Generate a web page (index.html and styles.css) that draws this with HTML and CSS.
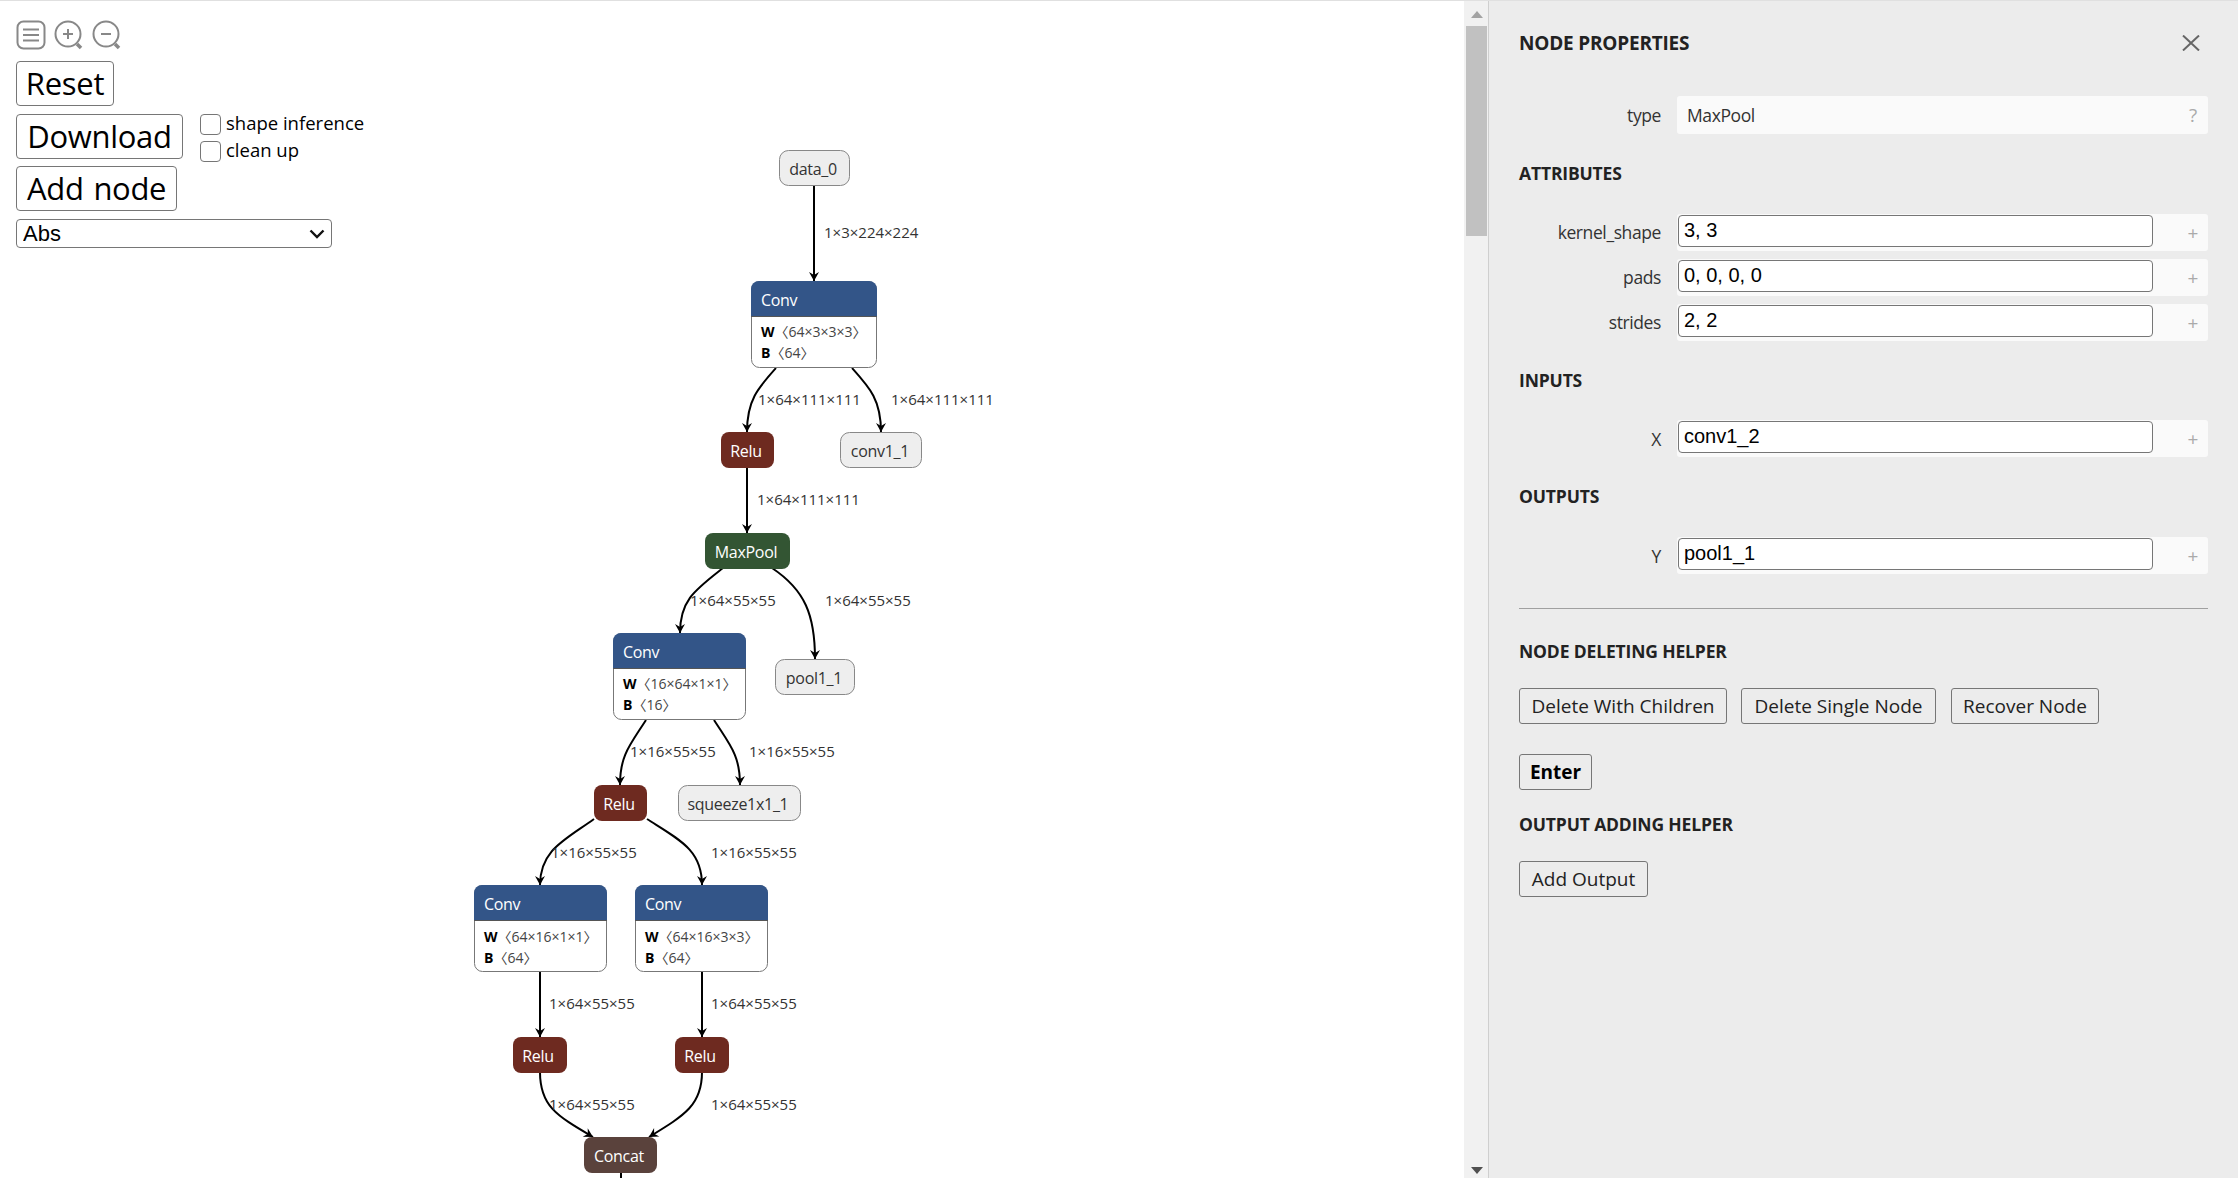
FILE: index.html
```html
<!DOCTYPE html>
<html lang="en">
<head>
<meta charset="utf-8">
<title>Model editor</title>
<link rel="stylesheet" href="styles.css">
</head>
<body>
<div class="app">
  <main class="canvas">
    <svg class="graph" width="1464" height="1177" viewBox="0 1 1464 1177" xmlns="http://www.w3.org/2000/svg">
      <defs>
        <marker id="arrow" markerWidth="12" markerHeight="12" refX="10" refY="6" orient="auto" markerUnits="userSpaceOnUse">
          <path d="M1,1 L10,6 L1,11 L4,6 Z" fill="#000"/>
        </marker>
      </defs>
      <g class="edges">
        <path d="M814,186 L814,281"/>
        <path d="M776,368 C758,388 747,400 747,432"/>
        <path d="M852,368 C870,388 881,400 881,432"/>
        <path d="M747,468 L747,533"/>
        <path d="M723,568 C695,590 680,600 680,633"/>
        <path d="M772,568 C805,590 815,615 815,659"/>
        <path d="M646,720 C630,745 620,755 620,785"/>
        <path d="M714,720 C730,745 740,755 740,785"/>
        <path d="M594,819 C565,840 540,850 540,885"/>
        <path d="M647,819 C680,840 702,850 702,885"/>
        <path d="M540,972 L540,1037"/>
        <path d="M702,972 L702,1037"/>
        <path d="M540,1072 C540,1105 555,1115 593,1137"/>
        <path d="M702,1072 C702,1105 685,1115 649,1137"/>
        <path d="M621,1173 L621,1190"/>
      </g>
      <g class="labels">
        <text x="824" y="238">1×3×224×224</text>
        <text x="758" y="405">1×64×111×111</text>
        <text x="891" y="405">1×64×111×111</text>
        <text x="757" y="505">1×64×111×111</text>
        <text x="690" y="606">1×64×55×55</text>
        <text x="825" y="606">1×64×55×55</text>
        <text x="630" y="757">1×16×55×55</text>
        <text x="749" y="757">1×16×55×55</text>
        <text x="551" y="858">1×16×55×55</text>
        <text x="711" y="858">1×16×55×55</text>
        <text x="549" y="1009">1×64×55×55</text>
        <text x="711" y="1009">1×64×55×55</text>
        <text x="549" y="1110">1×64×55×55</text>
        <text x="711" y="1110">1×64×55×55</text>
      </g>

      <g class="tensor">
        <rect x="779.5" y="150.5" width="70" height="35" rx="9"/><text x="813" y="175">data_0</text>
        <rect x="840.5" y="432.5" width="81" height="35" rx="9"/><text x="880" y="457">conv1_1</text>
        <rect x="775.5" y="659.5" width="79" height="35" rx="9"/><text x="814" y="684">pool1_1</text>
        <rect x="678.5" y="785.5" width="122" height="35" rx="9"/><text x="738" y="810">squeeze1x1_1</text>
      </g>

      <g class="op relu">
        <rect x="721" y="432" width="53" height="36" rx="8"/><text x="746" y="457">Relu</text>
        <rect x="594" y="785" width="53" height="36" rx="8"/><text x="619" y="810">Relu</text>
        <rect x="513" y="1037" width="54" height="36" rx="8"/><text x="538" y="1062">Relu</text>
        <rect x="675" y="1037" width="54" height="36" rx="8"/><text x="700" y="1062">Relu</text>
      </g>
      <g class="op pool">
        <rect x="705" y="533" width="85" height="36" rx="8"/><text x="746" y="558">MaxPool</text>
      </g>
      <g class="op concat">
        <rect x="584" y="1137" width="73" height="36" rx="8"/><text x="619" y="1162">Concat</text>
      </g>

      <g class="conv">
        <rect class="conv-box" x="751.5" y="281.5" width="125" height="86" rx="8"/>
        <path class="conv-head" d="M751,316 V289 a8,8 0 0 1 8,-8 H869 a8,8 0 0 1 8,8 V316 Z"/>
        <line class="conv-rule" x1="751" y1="316.5" x2="877" y2="316.5"/>
        <text class="conv-name" x="761" y="306">Conv</text>
        <text class="attr" x="761" y="337"><tspan class="attr-key">W</tspan>〈64×3×3×3〉</text>
        <text class="attr" x="761" y="358"><tspan class="attr-key">B</tspan>〈64〉</text>
      </g>
      <g class="conv">
        <rect class="conv-box" x="613.5" y="633.5" width="132" height="86" rx="8"/>
        <path class="conv-head" d="M613,668 V641 a8,8 0 0 1 8,-8 H738 a8,8 0 0 1 8,8 V668 Z"/>
        <line class="conv-rule" x1="613" y1="668.5" x2="746" y2="668.5"/>
        <text class="conv-name" x="623" y="658">Conv</text>
        <text class="attr" x="623" y="689"><tspan class="attr-key">W</tspan>〈16×64×1×1〉</text>
        <text class="attr" x="623" y="710"><tspan class="attr-key">B</tspan>〈16〉</text>
      </g>
      <g class="conv">
        <rect class="conv-box" x="474.5" y="885.5" width="132" height="86" rx="8"/>
        <path class="conv-head" d="M474,920 V893 a8,8 0 0 1 8,-8 H599 a8,8 0 0 1 8,8 V920 Z"/>
        <line class="conv-rule" x1="474" y1="920.5" x2="607" y2="920.5"/>
        <text class="conv-name" x="484" y="910">Conv</text>
        <text class="attr" x="484" y="942"><tspan class="attr-key">W</tspan>〈64×16×1×1〉</text>
        <text class="attr" x="484" y="963"><tspan class="attr-key">B</tspan>〈64〉</text>
      </g>
      <g class="conv">
        <rect class="conv-box" x="635.5" y="885.5" width="132" height="86" rx="8"/>
        <path class="conv-head" d="M635,920 V893 a8,8 0 0 1 8,-8 H760 a8,8 0 0 1 8,8 V920 Z"/>
        <line class="conv-rule" x1="635" y1="920.5" x2="768" y2="920.5"/>
        <text class="conv-name" x="645" y="910">Conv</text>
        <text class="attr" x="645" y="942"><tspan class="attr-key">W</tspan>〈64×16×3×3〉</text>
        <text class="attr" x="645" y="963"><tspan class="attr-key">B</tspan>〈64〉</text>
      </g>
    </svg>

    <div class="toolbar">
      <div class="icons">
        <svg class="icon" width="30" height="30" viewBox="0 0 30 30" xmlns="http://www.w3.org/2000/svg">
          <rect x="1.5" y="1.5" width="27" height="27" rx="6"/>
          <path d="M7,9.5 H23 M7,15 H23 M7,20.5 H23"/>
        </svg>
        <svg class="icon" width="30" height="30" viewBox="0 0 30 30" xmlns="http://www.w3.org/2000/svg">
          <circle cx="14" cy="14" r="12.5"/>
          <path d="M14,9 V19 M9,14 H19"/>
          <path class="handle" d="M23,24 L27,28"/>
        </svg>
        <svg class="icon" width="30" height="30" viewBox="0 0 30 30" xmlns="http://www.w3.org/2000/svg">
          <circle cx="14" cy="14" r="12.5"/>
          <path d="M9,14 H19"/>
          <path class="handle" d="M23,24 L27,28"/>
        </svg>
      </div>
      <button class="big-btn btn-reset" type="button">Reset</button>
      <div class="download-row">
        <button class="big-btn btn-download" type="button">Download</button>
        <div class="checks">
          <label class="check"><input type="checkbox"><span>shape inference</span></label>
          <label class="check"><input type="checkbox"><span>clean up</span></label>
        </div>
      </div>
      <button class="big-btn" type="button">Add node</button>
      <div class="select-wrap">
        <select class="op-select"><option>Abs</option></select>
        <svg class="chevron" width="16" height="10" viewBox="0 0 16 10" xmlns="http://www.w3.org/2000/svg"><path d="M1.5,1.5 L8,8 L14.5,1.5"/></svg>
      </div>
    </div>
  </main>

  <div class="scrollbar">
    <span class="arrow-up"></span>
    <span class="thumb"></span>
    <span class="track"></span>
    <span class="arrow-down"></span>
  </div>

  <aside class="panel">
    <header class="panel-head">
      <h2 class="title title-main">NODE PROPERTIES</h2>
      <svg class="close" width="18" height="16" viewBox="0 0 18 16" xmlns="http://www.w3.org/2000/svg"><path d="M1,0.5 L17,15.5 M17,0.5 L1,15.5"/></svg>
    </header>

    <div class="row row-type">
      <span class="row-label">type</span>
      <div class="row-box">
        <span class="type-value">MaxPool</span>
        <span class="row-mark">?</span>
      </div>
    </div>

    <h2 class="title section section-first">ATTRIBUTES</h2>
    <div class="rows">
      <div class="row"><span class="row-label">kernel_shape</span><div class="row-box"><input class="row-input" value="3, 3"><span class="row-mark">+</span></div></div>
      <div class="row"><span class="row-label">pads</span><div class="row-box"><input class="row-input" value="0, 0, 0, 0"><span class="row-mark">+</span></div></div>
      <div class="row"><span class="row-label">strides</span><div class="row-box"><input class="row-input" value="2, 2"><span class="row-mark">+</span></div></div>
    </div>

    <h2 class="title section">INPUTS</h2>
    <div class="rows">
      <div class="row row-io"><span class="row-label">X</span><div class="row-box"><input class="row-input" value="conv1_2"><span class="row-mark">+</span></div></div>
    </div>

    <h2 class="title section">OUTPUTS</h2>
    <div class="rows rows-last">
      <div class="row row-io"><span class="row-label">Y</span><div class="row-box"><input class="row-input" value="pool1_1"><span class="row-mark">+</span></div></div>
    </div>

    <hr class="divider">

    <h2 class="title helper-1">NODE DELETING HELPER</h2>
    <div class="btn-row">
      <button class="panel-btn btn-del-children" type="button">Delete With Children</button>
      <button class="panel-btn btn-del-single" type="button">Delete Single Node</button>
      <button class="panel-btn btn-recover" type="button">Recover Node</button>
    </div>
    <button class="panel-btn enter" type="button">Enter</button>

    <h2 class="title helper-2">OUTPUT ADDING HELPER</h2>
    <button class="panel-btn btn-add-output" type="button">Add Output</button>
  </aside>
</div>
</body>
</html>
```

FILE: styles.css
```css
* { box-sizing: border-box; }
html, body { margin: 0; height: 100%; overflow: hidden; }
body { font-family: "Open Sans", "Noto Sans", sans-serif; color: #000; background: #fff; }

.app { display: flex; height: 1178px; border-top: 1px solid #e0e0e0; }

/* left canvas */
.canvas { position: relative; flex: 0 0 1464px; height: 1177px; overflow: hidden; background: #fff; }
.graph { position: absolute; left: 0; top: 0; }
.toolbar { position: relative; display: flex; flex-direction: column; align-items: flex-start; padding: 19px 0 0 16px; }

.icons { display: flex; gap: 8px; height: 30px; margin-bottom: 11px; }
.icon { fill: none; stroke: #888; stroke-width: 2; }
.icon .handle { stroke-width: 3.5; }

.big-btn {
  height: 45px; padding: 0 10px; font: 400 31px/1 "Open Sans", sans-serif; letter-spacing: -0.3px; word-spacing: 2px;
  color: #000; background: #fff; border: 1.5px solid #767676; border-radius: 4px;
}
.btn-reset { width: 98px; padding: 0; }
.btn-download { width: 167px; padding: 0; }
.download-row { display: flex; align-items: flex-start; gap: 17px; height: 45px; margin: 8px 0 7px; }
.checks { display: flex; flex-direction: column; gap: 6px; }
.check { display: flex; align-items: center; gap: 5px; height: 21px; font-size: 18.5px; }
.check span { margin-top: -5px; }
.check input { appearance: none; width: 21px; height: 21px; margin: 0; background: #fff; border: 1.5px solid #767676; border-radius: 4px; }

.select-wrap { position: relative; margin-top: 8px; }
.op-select {
  display: block; appearance: none; width: 316px; height: 29px; padding: 0 0 0 6px;
  font: 400 22px "Liberation Sans", Arial, sans-serif; color: #000; background: #fff;
  border: 1.5px solid #767676; border-radius: 4px;
}
.chevron { position: absolute; right: 7px; top: 10px; fill: none; stroke: #111; stroke-width: 2.4; pointer-events: none; }

/* graph */
.edges { fill: none; stroke: #000; stroke-width: 2; }
.edges path { marker-end: url(#arrow); }
.labels text { font: 400 15px "Open Sans", sans-serif; fill: #333; }
.tensor rect { fill: #eee; stroke: #888; stroke-width: 1; }
.tensor text { font: 400 16px "Open Sans", sans-serif; letter-spacing: -0.3px; fill: #333; text-anchor: middle; }
.op rect { stroke: #888; stroke-width: 0; }
.op text { font: 400 16px "Open Sans", sans-serif; letter-spacing: -0.3px; fill: #fff; text-anchor: middle; }
.relu rect { fill: #6e2a20; }
.pool rect { fill: #335533; }
.concat rect { fill: #5a423c; }
.conv-box { fill: #fff; stroke: #777; stroke-width: 1; }
.conv-head { fill: #335588; }
.conv-rule { stroke: #555; stroke-width: 1; }
.conv-name { font: 400 16px "Open Sans", sans-serif; letter-spacing: -0.3px; fill: #fff; }
.attr { font: 400 14px "Open Sans", "Noto Sans CJK SC", sans-serif; fill: #444; }
.attr-key { font-weight: 700; fill: #000; }

/* scrollbar */
.scrollbar { flex: 0 0 24px; height: 1177px; display: flex; flex-direction: column; align-items: center; background: #f1f1f1; padding: 10px 1px 4px 2px; }
.arrow-up { width: 0; height: 0; border-left: 6px solid transparent; border-right: 6px solid transparent; border-bottom: 7px solid #a3a3a3; margin-bottom: 8px; }
.thumb { width: 100%; height: 210px; flex: none; background: #c1c1c1; }
.track { flex: 1; }
.arrow-down { width: 0; height: 0; border-left: 6px solid transparent; border-right: 6px solid transparent; border-top: 7px solid #505050; }

/* panel */
.panel { flex: 1; height: 1177px; background: #ececec; border-left: 1px solid #cfcfcf; padding: 29px 30px 0 30px; color: #222; font-size: 18px; overflow: hidden; }
.title { margin: 0; height: 26px; font: 700 17.5px/26px "Open Sans", sans-serif; letter-spacing: -0.15px; color: #222; }
.title-main { font-size: 19px; letter-spacing: -0.2px; }
.panel-head { display: flex; justify-content: space-between; align-items: center; padding-right: 8px; margin-bottom: 40px; }
.close { fill: none; stroke: #666; stroke-width: 2; }
.section { margin: 27px 0; }
.section-first { margin: 26px 0 28px; }
.rows { display: flex; flex-direction: column; gap: 9px; }
.row { display: grid; grid-template-columns: 142px 1fr; column-gap: 16px; align-items: center; height: 36px; }
.row-type { height: 38px; }
.row-label { text-align: right; font-size: 17.5px; letter-spacing: -0.4px; color: #333; margin-top: -2px; }
.row-type .row-label, .row-io .row-label { margin-top: 0; }
.row-box { display: flex; align-items: flex-start; height: 100%; background: #fafafa; border-radius: 3px; padding: 1px 0 0 1px; }
.row-type .row-box { align-items: center; padding: 0 0 0 10px; }
.type-value { flex: 1; font-size: 17.5px; letter-spacing: -0.4px; color: #333; }
.row-input {
  flex: 0 0 475px; height: 32px; padding: 0 5px 1px; font: 400 20px "Liberation Sans", Arial, sans-serif; color: #000;
  background: #fff; border: 1.5px solid #767676; border-radius: 4px; outline: none;
}
.row-mark { margin-left: auto; width: 30px; text-align: center; font-size: 19px; line-height: 36px; color: #aaa; }
.row-type .row-mark { line-height: 34px; }

.rows-last { margin-top: 28px; }
.divider { margin: 35px 0 29px; border: 0; border-top: 1px solid #a0a0a0; height: 0; }
.btn-row { display: flex; gap: 14px; margin: 24px 0 30px; }
.panel-btn {
  display: block; height: 36px; padding: 0 11px; font: 400 19px/1 "Open Sans", sans-serif; color: #222;
  background: transparent; border: 1.5px solid #767676; border-radius: 3px;
}
.btn-del-children { width: 208px; padding: 0; }
.btn-del-single { width: 195px; padding: 0; }
.btn-recover { width: 148px; padding: 0; margin-left: 1px; }
.btn-add-output { width: 129px; padding: 0; }
.enter { width: 73px; padding: 0; font-weight: 700; color: #000; }
.helper-2 { margin: 21px 0 24px; }
```
